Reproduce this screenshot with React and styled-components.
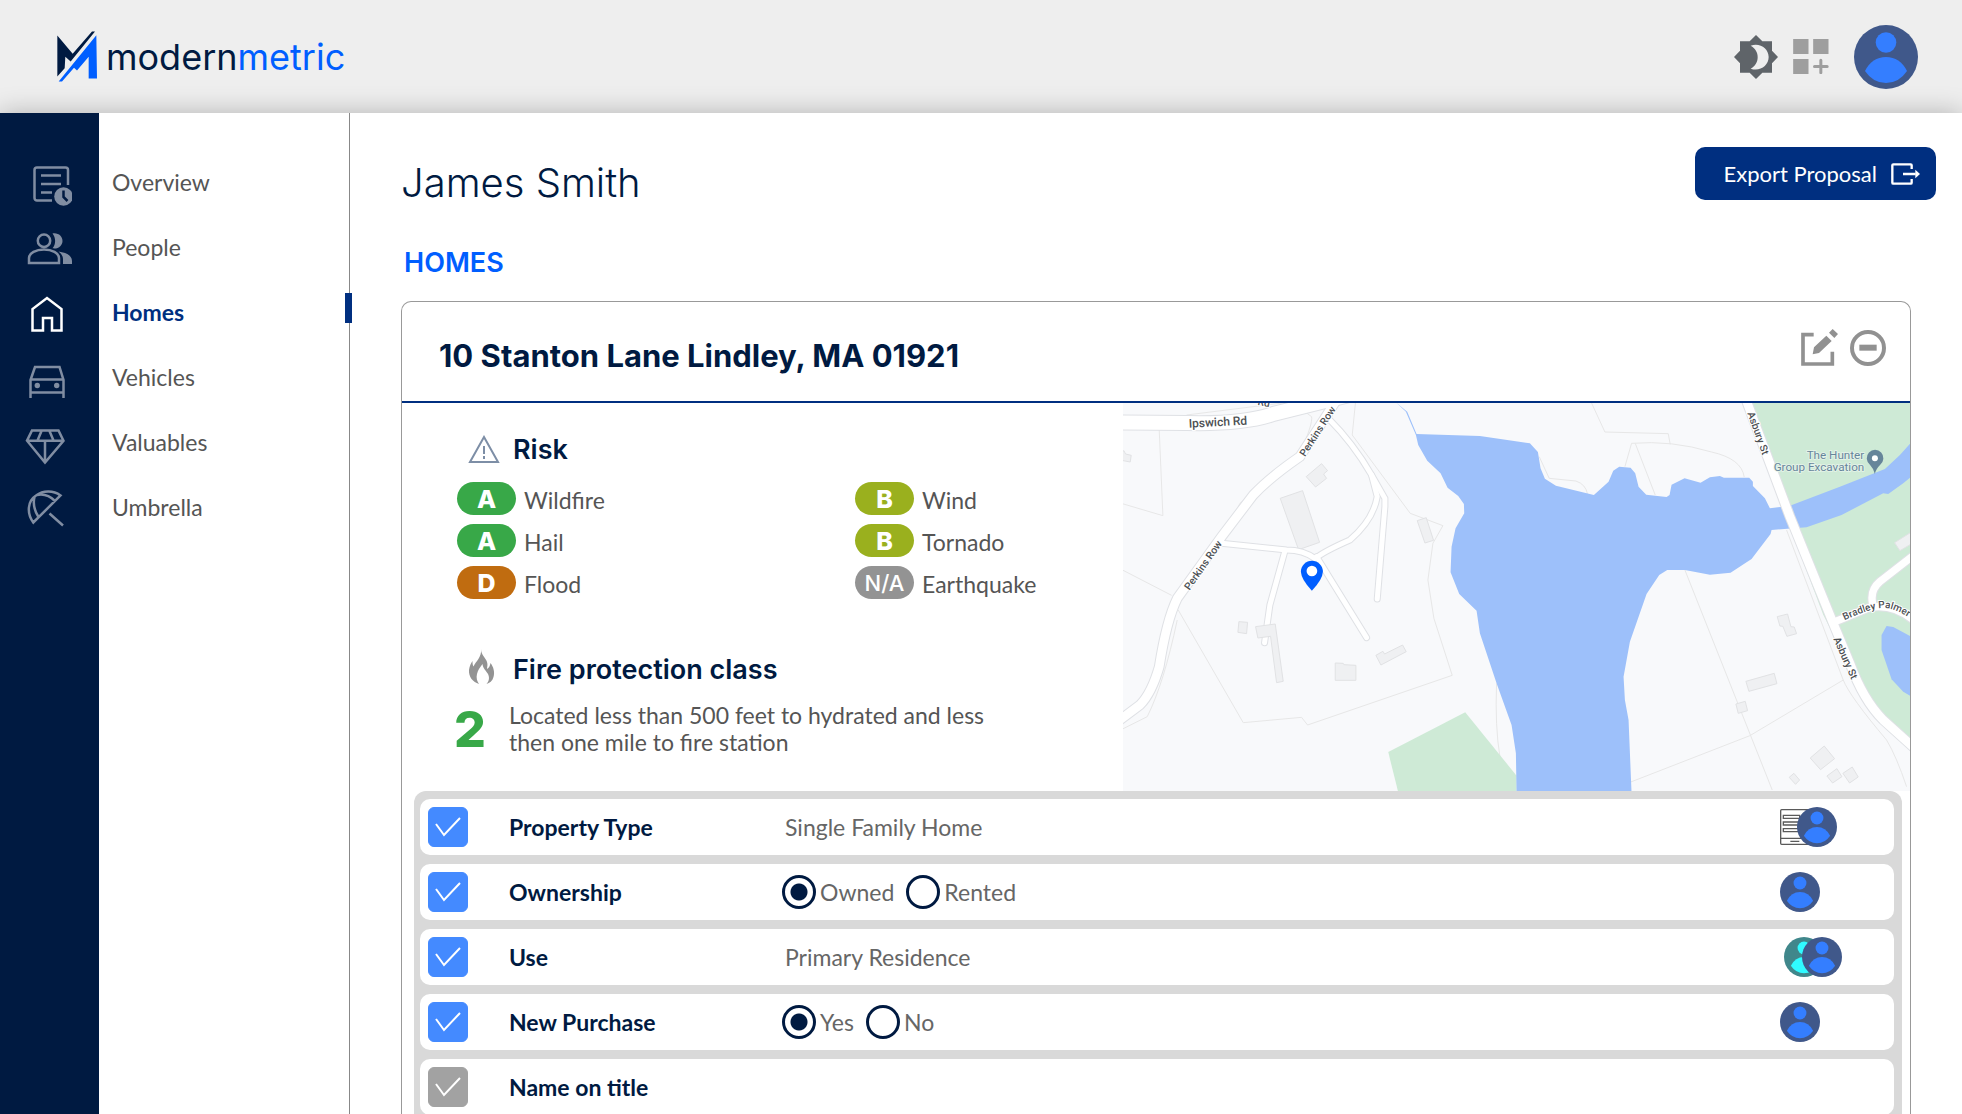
import { useState } from 'react';
import styled, { createGlobalStyle, css } from 'styled-components';

const sections = ['Overview', 'People', 'Homes', 'Vehicles', 'Valuables', 'Umbrella'];

const risks = [
  { grade: 'A', name: 'Wildfire', color: '#38a848' },
  { grade: 'B', name: 'Wind', color: '#9ab01e' },
  { grade: 'A', name: 'Hail', color: '#38a848' },
  { grade: 'B', name: 'Tornado', color: '#9ab01e' },
  { grade: 'D', name: 'Flood', color: '#c06c10' },
  { grade: 'N/A', name: 'Earthquake', color: '#939393', small: true },
];

const fields = [
  { id: 'type', label: 'Property Type', value: 'Single Family Home', sources: ['document', 'user'] },
  { id: 'ownership', label: 'Ownership', options: ['Owned', 'Rented'], sources: ['user'] },
  { id: 'use', label: 'Use', value: 'Primary Residence', sources: ['agent', 'user'] },
  { id: 'purchase', label: 'New Purchase', options: ['Yes', 'No'], sources: ['user'] },
  { id: 'title', label: 'Name on title', muted: true, sources: [] },
];

const railIcons = {
  Overview: (
    <>
      <path d="M28 49.500H13a2.500 2.500 0 0 1-2.500-2.500V19a2.500 2.500 0 0 1 2.500-2.500h28.500a2.500 2.500 0 0 1 2.500 2.500V34M17 24.500h20M17 33h20M17 41.500h11"/>
      <circle cx="39.500" cy="45.500" r="9.300" fill="currentColor" stroke="none"/>
      <path d="M39.500 39.500v6.500l4 4" stroke="#001a41"/>
    </>
  ),
  People: (
    <>
      <circle cx="20" cy="24.700" r="6.200"/>
      <path d="M5 47v-5c0-5 7-8.500 15-8.500S35 37 35 42v5z"/>
      <path d="M28.500 17.500c6-1 10 3 10 7.400s-4 8.400-10 7.400c3.500-4 3.500-10.500 0-14.800zM34.500 35.500C42 36.500 48 39.500 48 45v3h-9v-5c0-3-2-5.500-4.500-7.500z" fill="currentColor" stroke="none"/>
    </>
  ),
  Homes: <path d="M8.500 49.500V28L23 17l14.500 11v21.500h-9.500V37h-9v12.500z"/>,
  Vehicles: (
    <>
      <path d="M6.500 52V34l4.500-13h24.500L39.500 34v18M6.500 33.500h33M6.500 46.500h33"/>
      <circle cx="13.300" cy="39.500" r="2.700" fill="currentColor" stroke="none"/>
      <circle cx="32.700" cy="39.500" r="2.700" fill="currentColor" stroke="none"/>
    </>
  ),
  Valuables: <path d="M8 19.500h26.500l5 10.200L21 51.500 3 29.700zM3 29.700h36.500M17.500 20l-4 9.500M25.500 20l4 9.500M21 30v21"/>,
  Umbrella: <path d="M9.300 46.500C2.500 37 3.500 25 12 19.500c7-5 17-5.500 24.500 0zM10.500 21c-1.500 6-.5 13 4 20M13 19c7-1.500 13 1 18 6M25.500 37.500L39 49.500"/>,
};

const RailIcon = ({ name }) => (
  <svg
    width="48" height="65" viewBox="0 0 48 65" aria-hidden="true"
    fill="none" stroke="currentColor" strokeWidth="2.500"
  >
    {railIcons[name]}
  </svg>
);

const LogoMark = () => (
  <svg width="40" height="51" viewBox="170 92 120 152" aria-hidden="true">
    <path d="M171 105L217 160 275 93H284L211 183 195 169 193 203 171 228z" fill="#001a41"/>
    <path d="M288 104L290 234H265V169L230 210 221 202 185 243H175z" fill="#005eff"/>
  </svg>
);

const ThemeIcon = () => (
  <svg width="44" height="44" viewBox="223 109 132 132" aria-hidden="true">
    <path d="M241 128h29l19-19 19 19h29v28l18 19-18 19v28h-29l-19 19-19-19h-29v-28l-18-19 18-19z" fill="#5f6469"/>
    <path d="M273 141c27-10 54 8 54 34s-27 45-54 35c28-14 28-55 0-69z" fill="#eee"/>
  </svg>
);

const AppsIcon = () => (
  <svg width="36" height="35" viewBox="399 123 107 105" aria-hidden="true" fill="#9e9e9e">
    <path d="M399 123h46v45h-46zM459 123h46v45h-46zM399 183h46v45h-46z"/>
    <path d="M482 187v37M463 205.500h38" stroke="#9e9e9e" strokeWidth="9" strokeLinecap="round"/>
  </svg>
);

const ExportIcon = () => (
  <svg width="29" height="22" viewBox="692 487 87 66" aria-hidden="true" fill="none" stroke="#fff" strokeWidth="7">
    <path d="M754 505v-11q0-3-3-3h-52q-3 0-3 3v52q0 3 3 3h52q3 0 3-3v-11M728 520h38"/>
    <path d="M765 507l14 13-14 13z" fill="#fff" stroke="none"/>
  </svg>
);

const EditIcon = () => (
  <svg width="37" height="37" viewBox="183 84 111 111" aria-hidden="true" fill="#919191">
    <path d="M221 101h-32v88h88v-37" fill="none" stroke="#919191" strokeWidth="11"/>
    <path d="M218 160l4-21 37-35 16 16-38 36zM267 95l11-11 16 15-11 12z"/>
  </svg>
);

const CollapseIcon = () => (
  <svg width="36" height="36" viewBox="330 93 108 108" aria-hidden="true">
    <circle cx="384" cy="147" r="48" fill="none" stroke="#919191" strokeWidth="12"/>
    <path d="M358 137h52v18h-52z" fill="#919191"/>
  </svg>
);

const AlertIcon = () => (
  <svg width="32" height="28" viewBox="0 0 32 28" aria-hidden="true" fill="none" stroke="#7d8ea6" strokeWidth="2">
    <path d="M16 2l14 25H2zM16 11v8M16 21v3"/>
  </svg>
);

const FlameIcon = () => (
  <svg width="32" height="40" viewBox="0 0 32 40" aria-hidden="true">
    <path
      d="M13 0c0 6 5 9 6 13 1 3 0 5 0 7 2-1 3-3 3.500-6 3 4 4.500 9 3 14-1 4-4 6-7 7 3-3 3-7 1.500-10-1.500-3-5-5-5.500-10-3 4-4.500 6-5.500 10-1 4 0 7 2 10C5 33 .5 28 1 21c.5-4 2-7 3.500-9 0 2 0 4 1 5.500C8 12 14 8 13 0z"
      fill="#939393"
    />
  </svg>
);

const DocumentIcon = () => (
  <svg width="30" height="36" viewBox="240 84 90 108" aria-hidden="true" fill="none" stroke="#5a5a5a" strokeWidth="4">
    <rect x="242" y="86" width="100" height="104" rx="3"/>
    <path d="M250 103h49v9h-49zM250 123h49v9h-49zM250 143h49v9h-49zM304 103h30M242 172h100M271 181h27"/>
  </svg>
);

const Avatar = ({ size = 40, back = '#40588a', front = '#347eff' }) => (
  <svg width={size} height={size} viewBox="0 0 64 64" aria-hidden="true">
    <circle cx="32" cy="32" r="32" fill={back}/>
    <g fill={front}>
      <circle cx="32" cy="17.500" r="10.300"/>
      <path d="M11 46q7-14 21-14t21 14q-8 12-21 12T11 46z"/>
    </g>
  </svg>
);

const roads = [
  { width: 42, d: 'M-10 97L200 99Q370 103 460 72L700 12' },
  { width: 26, d: 'M650 30L540 200Q450 262 400 315L305 440 172 625Q140 690 118 830 95 910 60 945L0 990' },
  { width: 26, d: 'M1875 20L2010 380 2140 700 2190 820Q2230 930 2290 990L2390 1080' },
  { width: 22, d: 'M2140 697L2170 685 2250 652Q2320 640 2380 690M2258 640Q2250 600 2280 575L2380 497' },
  { width: 15, d: 'M305 460L500 480Q550 480 586 506 610 485 690 450 760 390 772 320L755 255Q700 160 625 85' },
  { width: 15, d: 'M755 255L795 325V350L772 627' },
  { width: 15, d: 'M495 483L450 645 434 758' },
  { width: 15, d: 'M590 500L740 743' },
];

const PropertyMap = () => (
  <MapDrawing viewBox="9 39 2361 1164" preserveAspectRatio="xMidYMid slice" role="img" aria-label="Map of the property">
    <path d="M0 30h2380v1180H0z" fill="#f8f9fb"/>
    <g fill="none" stroke="#e7e7e7" strokeWidth="3">
      <path d="M118 120l11 257-125-37M0 536l155 80M175 660l195 338 175-16 18 23 434-149-55-171-18-115 15-110 30-53-98-37-174-235 10-100"/>
      <path d="M540 190q40-90 35-110l-40-30M310 440l50-100 180-150M172 690q-40 190-90 290l-80 40M200 75l400-50"/>
      <path d="M1415 39l40 87 190 5 6 32M1515 230l20-70q120-10 240 26 90 20 98 75M1546 160l60 155M1258 200l30 65 80 8q30 10 35 40"/>
      <path d="M1695 540l262 660M2170 870l-280 167-360 140M2000 420l170 450q20 50 130 180 30 50 60 140M1130 880q-5 130 10 220"/>
    </g>
    <path d="M1895 39h485v1020l-90-85-90-120-90-180-110-290z" fill="#ceead6"/>
    <path d="M805 1086l231-119 154 190v50H835z" fill="#ceead6"/>
    <path
      d="M828 37L862 65 890 132 1080 138 1230 160 1254 186 1262 235 1275 266 1308 287 1422 315 1466 275 1480 242 1498 230 1532 233 1546 250 1556 290 1579 314 1640 321 1649 315 1655 284 1694 265 1742 278 1770 262 1800 258 1812 263H1888L1899 275V288L1935 325 1950 355 2008 348 2160 290 2295 237 2340 195 2380 150V255L2350 280 2305 312 2290 310 2165 375 2060 412 1955 420 1952 432 1895 507 1832 548 1770 554 1695 540H1642L1618 555 1580 612 1530 755 1511 860 1515 930 1526 990 1535 1210H1190L1188 1090 1175 1005 1130 880 1080 730 1070 662 1018 612 992 547 995 470 1007 415 1033 370 1032 342 1015 318 983 293 962 250 922 212 895 165 888 135 858 65z"
      fill="#9dc0fa"
    />
    <path d="M2300 708l20 3 60 32v180l-30-18-35-37-30-88v-45z" fill="#9dc0fa"/>
    <g fill="#eff0f2" stroke="#e1e2e4" strokeWidth="3">
      <path d="M481 325l67-23 51 155-63 22zM559 260l46-39 18 21-12 10 9 13-33 26zM892 392l27-9 22 68-26 8zM357 695l26 2-3 34-26-4zM646 819l24 1 2 4 36 2v45h-62zM768 796l21-12 5 8 54-27 11 20-76 40z"/>
      <path d="M0 190l12-8 5 10 17 4-3 20-31-6zM1972 680l31-8 10 38 10 1 7 20-29 8-12-30-9-1zM1878 874l85-24 8 31-84 23zM1848 942l28-8 7 28-28 8zM2071 1104l42-36 31 38-42 33zM2121 1158l30-22 15 24-28 19zM2169 1150l28-19 18 30-26 18zM2008 1162l14-12 17 20-12 13zM2324 458l60-38v36l-44 26z"/>
    </g>
    <g fill="none" stroke="#dfe1e5" strokeLinecap="round">
      {roads.map(({ d, width }) => <path key={d} d={d} strokeWidth={width + 6}/>)}
    </g>
    <g fill="none" stroke="#fff" strokeLinecap="round">
      {roads.map(({ d, width }) => <path key={d} d={d} strokeWidth={width}/>)}
    </g>
    <path d="M407 710l59-8 24 172-20 4-18-139-38 5z" fill="#eff0f2" stroke="#e1e2e4" strokeWidth="3"/>
    <path id="bradley" d="M2174 691Q2250 655 2290 654T2400 704" fill="none"/>
    <StreetNames>
      <text fontSize="36" transform="translate(207 113) rotate(-3)">Ipswich Rd</text>
      <text fontSize="31" transform="translate(412 44) rotate(12)">Rd</text>
      <text fontSize="31" transform="translate(555 202) rotate(-57)">Perkins Row</text>
      <text fontSize="31" transform="translate(209 602) rotate(-55)">Perkins Row</text>
      <text fontSize="31" transform="translate(1882 70) rotate(70)">Asbury St</text>
      <text fontSize="31" transform="translate(2140 747) rotate(66)">Asbury St</text>
      <text fontSize="30"><textPath href="#bradley">Bradley Palmer S</textPath></text>
    </StreetNames>
    <PlaceName>
      <text x="2233" y="207">The Hunter</text>
      <text x="2233" y="243">Group Excavation</text>
    </PlaceName>
    <path d="M2265 252q-2-14-15-28a25 25 0 1 1 31 0q-14 14-16 28z" fill="#66859a"/>
    <circle cx="2265" cy="205" r="9" fill="#fff"/>
    <path d="M576 602q-32-34-33-57a33 33 0 1 1 66 0q-1 23-33 57z" fill="#005eff"/>
    <circle cx="576" cy="543" r="16" fill="#fff"/>
  </MapDrawing>
);

const Field = ({ id, label, value, options, muted, sources }) => {
  const [checked, setChecked] = useState(true);
  const [choice, setChoice] = useState(0);

  return (
    <FieldRow>
      <TickBox>
        <input id={id} type="checkbox" checked={checked} disabled={muted} onChange={() => setChecked(!checked)}/>
        {checked && (
          <svg width="40" height="40" viewBox="0 0 40 40" aria-hidden="true">
            <path d="M8 17l8 11L32 11" fill="none" stroke="#fff" strokeWidth="2"/>
          </svg>
        )}
      </TickBox>
      <FieldLabel htmlFor={id}>{label}</FieldLabel>
      {options ? (
        <Options role="radiogroup" aria-label={label}>
          {options.map((option, index) => (
            <Option key={option}>
              <input type="radio" name={`${id}-option`} checked={choice === index} onChange={() => setChoice(index)}/>
              {option}
            </Option>
          ))}
        </Options>
      ) : (
        <Value>{value}</Value>
      )}
      <Sources>
        {sources.map((source) => (
          <Source key={source} $kind={source}>
            {source === 'document' && <DocumentIcon/>}
            {source === 'agent' && <Avatar back="#40878b" front="#30faff"/>}
            {source === 'user' && <Avatar/>}
          </Source>
        ))}
      </Sources>
    </FieldRow>
  );
};

const App = () => (
  <Shell>
    <GlobalStyle/>
    <TopBar>
      <Logo href="#home">
        <LogoMark/>
        <span>modern<em>metric</em></span>
      </Logo>
      <Tools>
        <IconButton aria-label="Toggle theme"><ThemeIcon/></IconButton>
        <IconButton aria-label="Apps"><AppsIcon/></IconButton>
        <Profile aria-label="Account"><Avatar size={64}/></Profile>
      </Tools>
    </TopBar>
    <Layout>
      <Rail aria-label="Shortcuts">
        {sections.map((name) => (
          <RailLink key={name} href={`#${name.toLowerCase()}`} aria-label={name} $active={name === 'Homes'}>
            <RailIcon name={name}/>
          </RailLink>
        ))}
      </Rail>
      <Menu aria-label="Sections">
        {sections.map((name) => (
          <MenuLink key={name} href={`#${name.toLowerCase()}`} $active={name === 'Homes'}>{name}</MenuLink>
        ))}
      </Menu>
      <Main>
        <TitleBar>
          <h1>James Smith</h1>
          <ExportButton>Export Proposal <ExportIcon/></ExportButton>
        </TitleBar>
        <SectionTitle>HOMES</SectionTitle>
        <Card>
          <CardHeader>
            <h3>10 Stanton Lane Lindley, MA 01921</h3>
            <CardActions>
              <IconButton aria-label="Edit home"><EditIcon/></IconButton>
              <IconButton aria-label="Collapse"><CollapseIcon/></IconButton>
            </CardActions>
          </CardHeader>
          <Summary>
            <Facts>
              <FactTitle><AlertIcon/>Risk</FactTitle>
              <Risks>
                {risks.map(({ grade, name, color, small }) => (
                  <Risk key={name}>
                    <Grade $color={color} $small={small}>{grade}</Grade>
                    <span>{name}</span>
                  </Risk>
                ))}
              </Risks>
              <FactTitle><FlameIcon/>Fire protection class</FactTitle>
              <FireClass>
                <strong>2</strong>
                <p>Located less than 500 feet to hydrated and less<br/>then one mile to fire station</p>
              </FireClass>
            </Facts>
            <PropertyMap/>
          </Summary>
          <Fields>
            {fields.map((field) => <Field key={field.id} {...field}/>)}
          </Fields>
        </Card>
      </Main>
    </Layout>
  </Shell>
);

export default App;

const GlobalStyle = createGlobalStyle`
  :root {
    --navy: #001a41;
    --royal: #002f80;
    --blue: #005eff;
    --text: #555;
    --font-heading: Inter, sans-serif;
    --font-body: Lato, sans-serif;
  }

  * {
    box-sizing: border-box;
  }

  body {
    margin: 0;
    background: #fff;
    color: var(--text);
    font-family: var(--font-body);
    font-size: 23px;
  }

  h1, h2, h3, p {
    margin: 0;
  }

  a {
    text-decoration: none;
  }

  button {
    border: none;
    padding: 0;
    background: none;
    font-family: inherit;
    cursor: pointer;
  }

  svg {
    display: block;
    flex-shrink: 0;
  }
`;

const Shell = styled.div`
  display: flex;
  flex-direction: column;
  height: 100vh;
`;

const TopBar = styled.header`
  display: flex;
  align-items: center;
  justify-content: space-between;
  height: 113px;
  flex-shrink: 0;
  padding: 0 44px 0 57px;
  background: #eee;
`;

const Logo = styled.a`
  display: flex;
  align-items: center;
  gap: 9px;
  color: var(--navy);
  font-family: var(--font-heading);
  font-size: 36px;

  em {
    color: var(--blue);
    font-style: normal;
  }
`;

const Tools = styled.div`
  display: flex;
  align-items: center;
  gap: 15px;
`;

const IconButton = styled.button`
  display: block;
`;

const Profile = styled(IconButton)`
  margin-left: 10px;
`;

const Layout = styled.div`
  position: relative;
  display: flex;
  flex: 1;
  min-height: 0;
  background: #fff;
  box-shadow: 0 0 24px rgba(0, 0, 0, .25);
`;

const Rail = styled.nav`
  width: 99px;
  flex-shrink: 0;
  padding: 38px 0 0 24px;
  background: var(--navy);
`;

const RailLink = styled.a`
  display: block;
  color: ${({ $active }) => ($active ? '#fff' : '#808da2')};
`;

const Menu = styled.nav`
  width: 251px;
  flex-shrink: 0;
  padding-top: 37px;
  border-right: 1px solid #888;
`;

const MenuLink = styled.a`
  position: relative;
  display: block;
  padding-left: 13px;
  color: var(--text);
  line-height: 65px;

  ${({ $active }) => $active && css`
    color: var(--royal);
    font-weight: 700;

    &::after {
      content: '';
      position: absolute;
      top: 13px;
      right: -3px;
      width: 7px;
      height: 30px;
      background: var(--royal);
    }
  `}
`;

const Main = styled.main`
  flex: 1;
  min-width: 0;
  padding: 34px 51px 0 51px;
  overflow-y: auto;
  scrollbar-width: none;
`;

const TitleBar = styled.div`
  display: flex;
  justify-content: space-between;
  align-items: flex-start;
  margin-right: -25px;

  h1 {
    padding-top: 9px;
    color: var(--navy);
    font-family: var(--font-heading);
    font-size: 40px;
    font-weight: 300;
    line-height: 53px;
  }
`;

const ExportButton = styled.button`
  display: flex;
  align-items: center;
  gap: 14px;
  height: 53px;
  padding: 0 16px 0 29px;
  border-radius: 10px;
  background: var(--royal);
  color: #fff;
  font-size: 22px;
`;

const SectionTitle = styled.h2`
  margin: 37px 0 22px 3px;
  color: var(--blue);
  font-family: var(--font-heading);
  font-size: 27px;
  font-weight: 600;
  line-height: 33px;
`;

const Card = styled.section`
  border: 1px solid #999;
  border-bottom: none;
  border-radius: 10px 10px 0 0;
`;

const CardHeader = styled.div`
  display: flex;
  align-items: center;
  justify-content: space-between;
  height: 101px;
  padding: 0 24px 0 37px;
  border-bottom: 2px solid var(--royal);

  h3 {
    padding-top: 8px;
    color: var(--navy);
    font-family: var(--font-heading);
    font-size: 31px;
    font-weight: 700;
  }
`;

const CardActions = styled.div`
  display: flex;
  gap: 12px;
  padding-bottom: 8px;
`;

const Summary = styled.div`
  display: grid;
  grid-template-columns: 11fr 12fr;
`;

const Facts = styled.div`
  padding: 28px 0 34px 55px;
`;

const FactTitle = styled.h4`
  display: flex;
  align-items: center;
  gap: 13px;
  height: 36px;
  margin: 0 0 15px;
  padding-left: 11px;
  color: var(--navy);
  font-family: var(--font-heading);
  font-size: 27px;
  font-weight: 600;
`;

const Risks = styled.div`
  display: grid;
  grid-template-columns: 398px 1fr;
  row-gap: 9px;
  margin-bottom: 52px;
`;

const Risk = styled.div`
  display: flex;
  align-items: center;
  gap: 8px;
  height: 33px;

  > span:last-child {
    padding-top: 3px;
  }
`;

const Grade = styled.span`
  display: flex;
  align-items: center;
  justify-content: center;
  width: 59px;
  height: 33px;
  border-radius: 17px;
  background: ${({ $color }) => $color};
  color: #fff;
  font-family: var(--font-heading);
  font-size: ${({ $small }) => ($small ? 22 : 25)}px;
  font-weight: ${({ $small }) => ($small ? 500 : 800)};
`;

const FireClass = styled.div`
  display: flex;
  align-items: center;
  margin-left: -3px;

  strong {
    width: 55px;
    color: #38a848;
    font-family: var(--font-heading);
    font-size: 50px;
    font-weight: 800;
    line-height: 54px;
  }

  p {
    line-height: 27px;
  }
`;

const MapDrawing = styled.svg`
  width: 100%;
  height: 388px;
`;

const StreetNames = styled.g`
  fill: #4c4f53;
  stroke: #fff;
  stroke-width: 6px;
  paint-order: stroke;
  font-family: Roboto, sans-serif;
  font-weight: 500;
`;

const PlaceName = styled.g`
  fill: #66859a;
  stroke: #e6f4ea;
  stroke-width: 5px;
  paint-order: stroke;
  font-family: Roboto, sans-serif;
  font-size: 35px;
  text-anchor: end;
`;

const Fields = styled.div`
  display: grid;
  gap: 9px;
  margin: 0 8px 0 12px;
  padding: 8px 8px 8px 6px;
  border-radius: 12px 12px 0 0;
  background: #d9d9d9;
`;

const FieldRow = styled.div`
  display: grid;
  grid-template-columns: 81px 273px 1fr 114px;
  align-items: center;
  height: 56px;
  padding-left: 8px;
  border-radius: 10px;
  background: #fff;
`;

const TickBox = styled.div`
  position: relative;
  width: 40px;
  height: 40px;

  input {
    appearance: none;
    display: block;
    width: 40px;
    height: 40px;
    margin: 0;
    border: 1px solid #448aff;
    border-radius: 6px;

    &:checked {
      background: #448aff;
    }

    &:disabled {
      border-color: #a2a2a2;
      background: #a2a2a2;
    }
  }

  svg {
    position: absolute;
    inset: 0;
    pointer-events: none;
  }
`;

const FieldLabel = styled.label`
  color: var(--navy);
  font-weight: 700;
`;

const Value = styled.span`
  padding-left: 3px;
  color: #666;
`;

const Options = styled.div`
  display: flex;
  gap: 12px;
`;

const Option = styled.label`
  display: flex;
  align-items: center;
  gap: 4px;
  color: #666;

  input {
    appearance: none;
    width: 34px;
    height: 34px;
    margin: 0;
    border: 3px solid var(--navy);
    border-radius: 50%;

    &:checked {
      background: radial-gradient(circle, var(--navy) 8px, #fff 9px);
    }
  }
`;

const Sources = styled.div`
  display: flex;
  align-items: center;
`;

const overlap = {
  document: '0 -13px 0 0',
  agent: '0 -22px 0 4px',
  user: '0',
};

const Source = styled.span`
  margin: ${({ $kind }) => overlap[$kind]};
`;
